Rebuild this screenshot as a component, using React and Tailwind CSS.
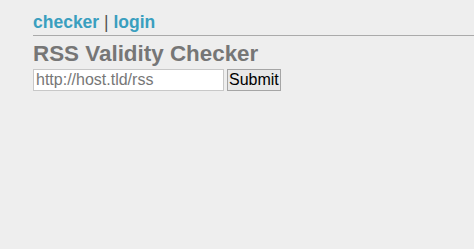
export default function App() {
  return (
    <div className="min-h-screen bg-[#eeeeee] pl-[33px] pt-[12px] font-['Liberation_Sans',Arial,sans-serif]">
      <nav className="border-b border-[#aaaaaa] pb-[2px] text-[17.5px] font-bold leading-[21px] text-[#3a9fbf]">
        <a href="#">checker</a>
        <span className="font-normal text-[#555555]"> | </span>
        <a href="#">login</a>
      </nav>
      <h1 className="mt-[5px] text-[22.4px] font-bold leading-[26px] text-[#767676]">RSS Validity Checker</h1>
      <form className="mt-[2px] flex items-center gap-[3px]" onSubmit={(e) => e.preventDefault()}>
        <input
          type="text"
          placeholder="http://host.tld/rss"
          className="h-[22px] w-[191px] border border-[#c8c8c8] bg-white px-[2px] text-[16px] text-black placeholder:text-[#777777] outline-none"
        />
        <button
          type="submit"
          className="h-[22px] border border-[#a5a5a5] bg-[#e8e8e8] px-[1px] text-[16px] leading-[18px] text-black"
        >
          Submit
        </button>
      </form>
    </div>
  );
}
